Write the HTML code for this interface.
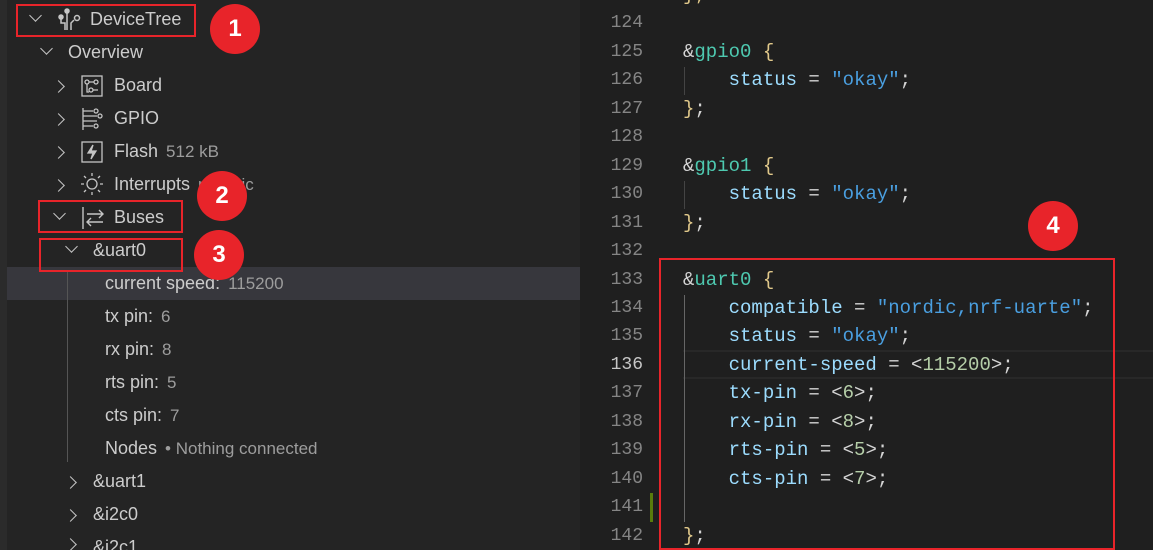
<!DOCTYPE html>
<html><head><meta charset="utf-8"><style>
*{margin:0;padding:0;box-sizing:border-box}
html{width:1153px;height:550px;overflow:hidden}
body{width:1153px;height:550px;overflow:hidden;background:#1f1f1f;position:relative;font-family:"Liberation Sans",sans-serif}
.strip{position:absolute;left:0;top:0;width:7px;height:550px;background:#2b2b2b}
.side{position:absolute;left:7px;top:0;width:573px;height:550px;background:#242424}
.row{position:absolute;left:0;height:33px;line-height:33px;font-size:18px;color:#cccccc;white-space:nowrap}
.sel{position:absolute;left:7px;top:267px;width:573px;height:33px;background:#37373d}
.dim{color:#9d9d9d;font-size:17px;margin-left:3px}
.chev{position:absolute;width:9px;height:9px;border-right:1.4px solid #c5c5c5;border-bottom:1.4px solid #c5c5c5}
.down{transform:rotate(45deg)}
.right{transform:rotate(-45deg)}
svg.ic{position:absolute}
.ed{position:absolute;left:580px;top:0;width:573px;height:550px;background:#1f1f1f;overflow:hidden}
.ln{position:absolute;left:0;width:63px;text-align:right;font-family:"Liberation Mono",monospace;font-size:18px;color:#858585;height:28.45px;line-height:28.45px}
.cd{position:absolute;left:103px;font-family:"Liberation Mono",monospace;font-size:19px;color:#d4d4d4;height:28.45px;line-height:28.45px;white-space:pre}
.k{color:#9cdcfe}.s{color:#4a9fe0}.l{color:#4ec9b0}.n{color:#b5cea8}.b{color:#e0c88a}
.box{position:absolute;border:2px solid #e8242a}
.circ{position:absolute;width:50px;height:50px;border-radius:50%;background:#e8242a;color:#fff;font-weight:bold;font-size:24px;text-align:center;line-height:50px}
.guide{position:absolute;width:1px;background:#555}
</style></head><body>
<div class="strip"></div>
<div class="side"></div>
<div class="sel"></div>
<div class="guide" style="left:67px;top:272px;height:190px"></div>

<div class="chev down" style="left:31px;top:11px"></div>
<svg class="ic" style="left:57px;top:8px" width="24" height="24" viewBox="0 0 24 24" fill="none" stroke="#c5c5c5" stroke-width="1.5"><circle cx="4" cy="9" r="2" fill="#c5c5c5"/><circle cx="10" cy="3" r="2" fill="#c5c5c5"/><circle cx="20" cy="10" r="2.5"/><path d="M4 11v4h4v7M10 5v17M17 12l-3 3v7M4 15"/></svg>
<div class="row" style="left:90px;top:3px">DeviceTree</div>

<div class="chev down" style="left:42px;top:44px"></div>
<div class="row" style="left:68px;top:36px">Overview</div>

<div class="chev right" style="left:54px;top:82px"></div>
<svg class="ic" style="left:81px;top:75px" width="22" height="22" viewBox="0 0 22 22" fill="none" stroke="#c5c5c5" stroke-width="1.3"><rect x="1" y="1" width="20" height="20"/><circle cx="6" cy="7" r="2"/><circle cx="15" cy="7" r="2"/><circle cx="10" cy="15" r="2"/><path d="M8 7h5M6 9v8h2M12 15h5"/></svg>
<div class="row" style="left:114px;top:69px">Board</div>

<div class="chev right" style="left:54px;top:115px"></div>
<svg class="ic" style="left:81px;top:107px" width="22" height="24" viewBox="0 0 22 24" fill="none" stroke="#c5c5c5" stroke-width="1.3"><path d="M2 1v22M2 4h4M2 9h4M2 14h4M2 19h4M6 4h6M6 9h10M6 14h10M6 19h6"/><circle cx="15" cy="4" r="2"/><circle cx="19" cy="9" r="2"/><circle cx="15" cy="19" r="2"/></svg>
<div class="row" style="left:114px;top:102px">GPIO</div>

<div class="chev right" style="left:54px;top:148px"></div>
<svg class="ic" style="left:81px;top:141px" width="22" height="22" viewBox="0 0 22 22" fill="none" stroke="#c5c5c5" stroke-width="1.3"><rect x="1" y="1" width="20" height="20"/><path d="M12 4l-5 8h5l-2 6 5-8h-5z" fill="#c5c5c5"/></svg>
<div class="row" style="left:114px;top:135px">Flash <span class="dim">512 kB</span></div>

<div class="chev right" style="left:54px;top:181px"></div>
<svg class="ic" style="left:81px;top:173px" width="22" height="22" viewBox="0 0 22 22" fill="none" stroke="#c5c5c5" stroke-width="1.3"><circle cx="11" cy="11" r="5"/><path d="M11 0v3M11 19v3M0 11h3M19 11h3M3 3l2 2M17 17l2 2M3 19l2-2M17 5l2-2"/></svg>
<div class="row" style="left:114px;top:168px">Interrupts <span class="dim">nrf-nvic</span></div>

<div class="chev down" style="left:55px;top:209px"></div>
<svg class="ic" style="left:81px;top:206px" width="24" height="24" viewBox="0 0 24 24" fill="none" stroke="#c5c5c5" stroke-width="1.4"><path d="M2 1v22M6 8h16M18 4l4 4-4 4M22 16H6M10 12l-4 4 4 4"/></svg>
<div class="row" style="left:114px;top:201px">Buses</div>

<div class="chev down" style="left:67px;top:242px"></div>
<div class="row" style="left:93px;top:234px">&amp;uart0</div>

<div class="row" style="left:105px;top:267px">current speed: <span class="dim">115200</span></div>
<div class="row" style="left:105px;top:300px">tx pin: <span class="dim">6</span></div>
<div class="row" style="left:105px;top:333px">rx pin: <span class="dim">8</span></div>
<div class="row" style="left:105px;top:366px">rts pin: <span class="dim">5</span></div>
<div class="row" style="left:105px;top:399px">cts pin: <span class="dim">7</span></div>
<div class="row" style="left:105px;top:432px">Nodes <span class="dim">• Nothing connected</span></div>

<div class="chev right" style="left:66px;top:478px"></div>
<div class="row" style="left:93px;top:465px">&amp;uart1</div>
<div class="chev right" style="left:66px;top:511px"></div>
<div class="row" style="left:93px;top:498px">&amp;i2c0</div>
<div class="chev right" style="left:66px;top:540px"></div>
<div class="row" style="left:93px;top:531px">&amp;i2c1</div>

<div class="ed">
<div style="position:absolute;left:103px;top:350px;width:470px;height:29px;border-top:2px solid #282828;border-bottom:2px solid #282828"></div>
<div style="position:absolute;left:70px;top:493px;width:3px;height:29px;background:#587c0c"></div>
<div class="guide" style="left:104px;top:67px;height:28px;background:#444"></div>
<div class="guide" style="left:104px;top:181px;height:28px;background:#444"></div>
<div class="guide" style="left:104px;top:295px;height:227px;background:#666"></div>

<div class="ln" style="top:-19px">123</div><div class="cd" style="top:-19px"><span class="b">};</span></div>
<div class="ln" style="top:9px">124</div>
<div class="ln" style="top:38px">125</div><div class="cd" style="top:38px">&amp;<span class="l">gpio0</span> <span class="b">{</span></div>
<div class="ln" style="top:66px">126</div><div class="cd" style="top:66px">    <span class="k">status</span> = <span class="s">"okay"</span>;</div>
<div class="ln" style="top:95px">127</div><div class="cd" style="top:95px"><span class="b">}</span>;</div>
<div class="ln" style="top:123px">128</div>
<div class="ln" style="top:152px">129</div><div class="cd" style="top:152px">&amp;<span class="l">gpio1</span> <span class="b">{</span></div>
<div class="ln" style="top:180px">130</div><div class="cd" style="top:180px">    <span class="k">status</span> = <span class="s">"okay"</span>;</div>
<div class="ln" style="top:209px">131</div><div class="cd" style="top:209px"><span class="b">}</span>;</div>
<div class="ln" style="top:237px">132</div>
<div class="ln" style="top:266px">133</div><div class="cd" style="top:266px">&amp;<span class="l">uart0</span> <span class="b">{</span></div>
<div class="ln" style="top:294px">134</div><div class="cd" style="top:294px">    <span class="k">compatible</span> = <span class="s">"nordic,nrf-uarte"</span>;</div>
<div class="ln" style="top:322px">135</div><div class="cd" style="top:322px">    <span class="k">status</span> = <span class="s">"okay"</span>;</div>
<div class="ln" style="top:351px;color:#c6c6c6">136</div><div class="cd" style="top:351px">    <span class="k">current-speed</span> = &lt;<span class="n">115200</span>&gt;;</div>
<div class="ln" style="top:379px">137</div><div class="cd" style="top:379px">    <span class="k">tx-pin</span> = &lt;<span class="n">6</span>&gt;;</div>
<div class="ln" style="top:408px">138</div><div class="cd" style="top:408px">    <span class="k">rx-pin</span> = &lt;<span class="n">8</span>&gt;;</div>
<div class="ln" style="top:436px">139</div><div class="cd" style="top:436px">    <span class="k">rts-pin</span> = &lt;<span class="n">5</span>&gt;;</div>
<div class="ln" style="top:465px">140</div><div class="cd" style="top:465px">    <span class="k">cts-pin</span> = &lt;<span class="n">7</span>&gt;;</div>
<div class="ln" style="top:493px">141</div>
<div class="ln" style="top:522px">142</div><div class="cd" style="top:522px"><span class="b">}</span>;</div>
</div>

<div class="box" style="left:16px;top:4px;width:180px;height:33px"></div>
<div class="box" style="left:38px;top:200px;width:145px;height:33px"></div>
<div class="box" style="left:39px;top:238px;width:144px;height:34px"></div>
<div class="box" style="left:659px;top:258px;width:456px;height:292px"></div>
<div class="circ" style="left:210px;top:4px">1</div>
<div class="circ" style="left:197px;top:171px">2</div>
<div class="circ" style="left:194px;top:230px">3</div>
<div class="circ" style="left:1028px;top:201px">4</div>
</body></html>
